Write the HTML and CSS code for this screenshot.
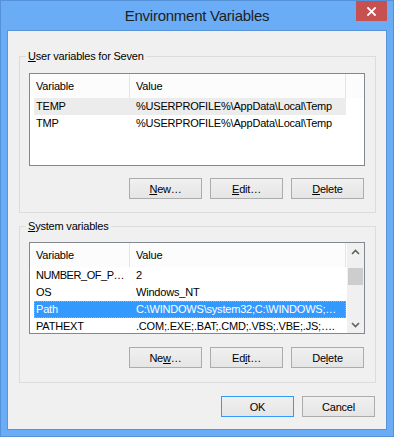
FILE: index.html
```html
<!DOCTYPE html>
<html>
<head>
<meta charset="utf-8">
<link rel="stylesheet" href="styles.css">
</head>
<body>
<div class="window">
  <div class="titlebar">
    <span></span>
    <div class="title">Environment Variables</div>
    <div class="close">
      <svg width="9" height="9" viewBox="0 0 9 9"><path d="M1 1L8 8M8 1L1 8" stroke="#fff" stroke-width="1.8" stroke-linecap="square"/></svg>
    </div>
  </div>
  <div class="client">
    <fieldset class="group group-user">
      <legend><u>U</u>ser variables for Seven</legend>
      <div class="list list-user">
        <div class="list-main">
          <div class="lv-header"><div class="hc hc1">Variable</div><div class="hc hc2">Value</div></div>
          <div class="row hot"><div class="c1">TEMP</div><div class="c2">%USERPROFILE%\AppData\Local\Temp</div></div>
          <div class="row"><div class="c1">TMP</div><div class="c2">%USERPROFILE%\AppData\Local\Temp</div></div>
        </div>
      </div>
      <div class="btnrow">
        <button class="btn"><u>N</u>ew…</button>
        <button class="btn"><u>E</u>dit…</button>
        <button class="btn"><u>D</u>elete</button>
      </div>
    </fieldset>
    <fieldset class="group group-sys">
      <legend><u>S</u>ystem variables</legend>
      <div class="list list-sys">
        <div class="list-main">
          <div class="lv-header"><div class="hc hc1">Variable</div><div class="hc hc2">Value</div></div>
          <div class="row"><div class="c1 tight">NUMBER_OF_P…</div><div class="c2">2</div></div>
          <div class="row"><div class="c1">OS</div><div class="c2">Windows_NT</div></div>
          <div class="row sel"><div class="c1">Path</div><div class="c2">C:\WINDOWS\system32;C:\WINDOWS;…</div></div>
          <div class="row"><div class="c1">PATHEXT</div><div class="c2">.COM;.EXE;.BAT;.CMD;.VBS;.VBE;.JS;….</div></div>
        </div>
        <div class="vscroll">
          <div class="arrow"><svg width="9" height="6" viewBox="0 0 9 6"><path d="M1 5L4.5 1.5L8 5" fill="none" stroke="#606060" stroke-width="1.6"/></svg></div>
          <div class="thumb"></div>
          <div class="arrow arrow-down"><svg width="9" height="6" viewBox="0 0 9 6"><path d="M1 1L4.5 4.5L8 1" fill="none" stroke="#606060" stroke-width="1.6"/></svg></div>
        </div>
      </div>
      <div class="btnrow">
        <button class="btn">Ne<u>w</u>…</button>
        <button class="btn">Ed<u>i</u>t…</button>
        <button class="btn">De<u>l</u>ete</button>
      </div>
    </fieldset>
    <div class="dlgbtns">
      <button class="btn btn-default">OK</button>
      <button class="btn">Cancel</button>
    </div>
  </div>
</div>
</body>
</html>
```

FILE: styles.css
```css
* { box-sizing: border-box; }
html, body { margin: 0; padding: 0; }
body {
  font-family: "Segoe UI", "Liberation Sans", Arial, sans-serif;
  font-size: 11px;
  letter-spacing: -0.2px;
  color: #000;
  background: #6aadf6;
}
.window {
  width: 394px;
  height: 437px;
  background: #6aadf6;
  border: 1px solid #5591d8;
  padding: 0 6px 6px;
  display: flex;
  flex-direction: column;
}
.titlebar {
  height: 29px;
  display: grid;
  grid-template-columns: 1fr auto 1fr;
}
.title {
  align-self: center;
  font-size: 15px;
  line-height: 20px;
  letter-spacing: -0.25px;
  color: #1e1e1e;
}
.close {
  justify-self: end;
  width: 31px;
  height: 20px;
  background: #c75050;
  display: flex;
  align-items: center;
  justify-content: center;
}
.client {
  flex: 1;
  background: #f0f0f0;
  border: 1px solid #5a94d8;
  display: flex;
  flex-direction: column;
}
.group {
  margin: 0 10px 0 11px;
  padding: 0 0 13px;
  border: 1px solid #dcdcdc;
  min-width: 0;
}
.group-user { margin-top: 17px; }
.group-sys { margin-top: 5px; padding-bottom: 14px; }
legend {
  margin-left: 6px;
  padding: 0 2px;
  line-height: 16px;
}
.list {
  margin: 9px 10px 0 9px;
  height: 93px;
  border: 1px solid #828790;
  background: #fff;
  display: flex;
  overflow: hidden;
}
.list-sys { margin-top: 8px; height: 92px; }
.list-main { flex: 1; min-width: 0; }
.lv-header {
  height: 24px;
  display: flex;
  background: #fcfcfc;
}
.hc {
  line-height: 24px;
  padding-left: 6px;
  border-right: 1px solid #e5e5e5;
  white-space: nowrap;
}
.hc1 { width: 100px; }
.hc2 { width: 216px; }
.row {
  display: flex;
  height: 17px;
  line-height: 17px;
  margin-left: 4px;
  width: 312px;
}
.c1, .c2 {
  white-space: nowrap;
  overflow: hidden;
}
.c1 { width: 95px; padding-left: 2px; }
.c1.tight { letter-spacing: -0.45px; }
.c2 { width: 217px; padding-left: 7px; }
.row.hot { background: #ececec; }
.row.sel {
  background: #3399ff;
  color: #fff;
  outline: 1px dotted #e9a04e;
  outline-offset: -1px;
}
.vscroll {
  width: 17px;
  background: #f0f0f0;
  display: flex;
  flex-direction: column;
  align-items: center;
}
.arrow {
  height: 17px;
  width: 17px;
  display: flex;
  align-items: center;
  justify-content: center;
}
.arrow-down { margin-top: auto; }
.thumb {
  margin-top: 8px;
  width: 15px;
  height: 17px;
  background: #cdcdcd;
}
.btnrow {
  display: flex;
  justify-content: flex-end;
  gap: 8px;
  margin-top: 12px;
  padding-right: 11px;
}
.group-sys .btnrow { margin-top: 13px; }
.btn {
  width: 73px;
  height: 21px;
  padding: 0;
  margin: 0;
  border: 1px solid #acacac;
  background: linear-gradient(#f0f0f0, #e5e5e5);
  font: inherit;
  letter-spacing: inherit;
  color: #000;
}
.btn-default { border-color: #3399ff; }
.dlgbtns {
  display: flex;
  justify-content: flex-end;
  gap: 8px;
  margin: 13px 11px 0 0;
}
```
